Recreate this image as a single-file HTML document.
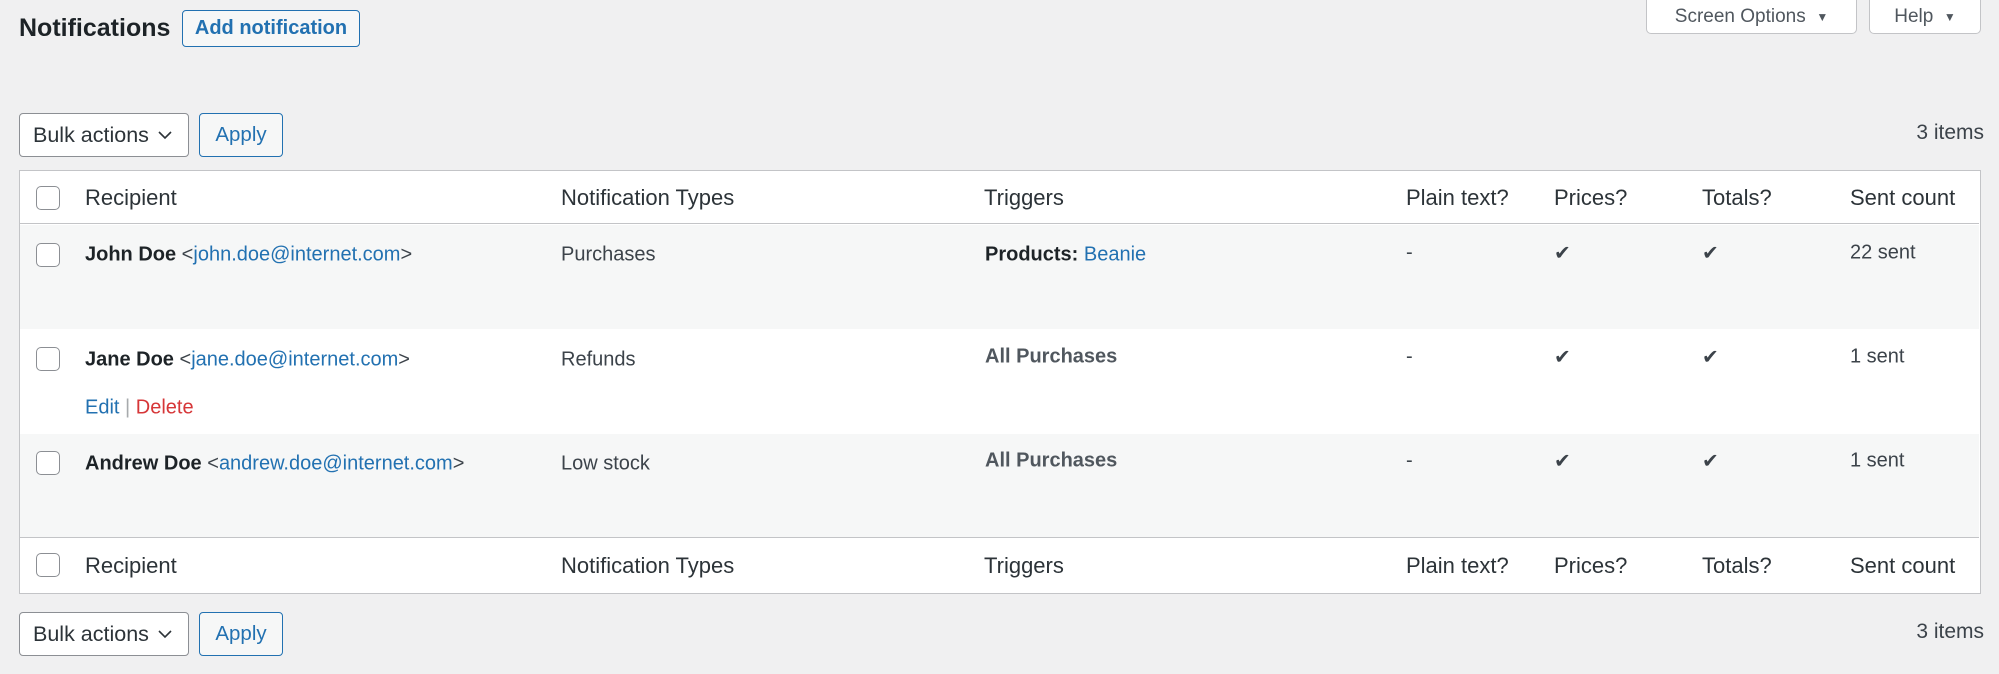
<!DOCTYPE html>
<html><head><meta charset="utf-8"><style>
*{box-sizing:border-box;margin:0;padding:0}
body{width:1999px;height:674px;background:#f0f0f1;font-family:"Liberation Sans",sans-serif;color:#3c434a;font-size:20px;position:relative;overflow:hidden}
.a{position:absolute;white-space:nowrap}
.btn{position:absolute;border:1.5px solid #2271b1;color:#2271b1;background:#f6f7f7;border-radius:4px;display:flex;align-items:center;justify-content:center;font-size:20px}
.sel{position:absolute;border:1.5px solid #8c8f94;background:#fff;border-radius:4px;color:#2c3338;font-size:21.5px;display:flex;align-items:center;padding-left:13px}
.tab{position:absolute;background:#fff;border:1px solid #c3c4c7;border-top:none;border-radius:0 0 5px 5px;color:#50575e;font-size:19px;display:flex;align-items:center;justify-content:center}
.cb{position:absolute;width:24px;height:24px;border:1.5px solid #8c8f94;border-radius:5px;background:#fff}
.row{position:absolute;left:20px;width:1959px}
.t{position:absolute;transform:translateY(-50%);white-space:nowrap}
a{color:#2271b1;text-decoration:none}
b{color:#1d2327;font-weight:bold}
.h{font-size:22px;color:#2c3338}
</style></head><body>
<div class="a" style="left:19px;top:14px;font-size:25px;font-weight:bold;color:#1d2327">Notifications</div>
<div class="btn" style="left:182px;top:10px;width:178px;height:37px;font-weight:bold">Add notification</div>
<div class="tab" style="left:1646px;top:0;width:211px;height:34px">Screen Options&nbsp;&nbsp;<span style="font-size:12px">▼</span></div>
<div class="tab" style="left:1869px;top:0;width:112px;height:34px">Help&nbsp;&nbsp;<span style="font-size:12px">▼</span></div>

<div class="sel" style="left:19px;top:113px;width:170px;height:44px">Bulk actions <svg style="margin-left:9px" width="14" height="9" viewBox="0 0 14 9"><path d="M1 1l6 6 6-6" fill="none" stroke="#2c3338" stroke-width="1.6"/></svg></div>
<div class="btn" style="left:199px;top:113px;width:84px;height:44px;font-size:20.5px">Apply</div>
<div class="a" style="right:15px;top:121px;font-size:21px">3 items</div>

<div style="position:absolute;left:19px;top:170px;width:1962px;height:424px;border:1px solid #c3c4c7;background:#fff"></div>
<div class="row" style="top:171px;height:53px;border-bottom:1px solid #c3c4c7;background:#fff"></div>
<div class="row" style="top:225px;height:104px;background:#f6f7f7"></div>
<div class="row" style="top:434px;height:103px;background:#f6f7f7"></div>
<div class="row" style="top:537px;height:56px;border-top:1px solid #c3c4c7;background:#fff"></div>

<div class="cb" style="left:36px;top:186px"></div>
<div class="t h" style="left:85px;top:198px">Recipient</div>
<div class="t h" style="left:561px;top:198px">Notification Types</div>
<div class="t h" style="left:984px;top:198px">Triggers</div>
<div class="t h" style="left:1406px;top:198px">Plain text?</div>
<div class="t h" style="left:1554px;top:198px">Prices?</div>
<div class="t h" style="left:1702px;top:198px">Totals?</div>
<div class="t h" style="left:1850px;top:198px">Sent count</div>

<div class="cb" style="left:36px;top:243px"></div>
<div class="t" style="left:85px;top:255px"><b>John Doe</b> &lt;<a>john.doe@internet.com</a>&gt;</div>
<div class="t" style="left:561px;top:255px">Purchases</div>
<div class="t" style="left:985px;top:255px"><b>Products:</b> <a>Beanie</a></div>
<div class="t" style="left:1406px;top:253px">-</div>
<div class="t" style="left:1554px;top:253px">✔</div>
<div class="t" style="left:1702px;top:253px">✔</div>
<div class="t" style="left:1850px;top:253px">22 sent</div>

<div class="cb" style="left:36px;top:347px"></div>
<div class="t" style="left:85px;top:360px"><b>Jane Doe</b> &lt;<a>jane.doe@internet.com</a>&gt;</div>
<div class="t" style="left:85px;top:408px"><a>Edit</a> <span style="color:#a7aaad">|</span> <span style="color:#d63638">Delete</span></div>
<div class="t" style="left:561px;top:360px">Refunds</div>
<div class="t" style="left:985px;top:357px;font-weight:bold;color:#50575e">All Purchases</div>
<div class="t" style="left:1406px;top:357px">-</div>
<div class="t" style="left:1554px;top:357px">✔</div>
<div class="t" style="left:1702px;top:357px">✔</div>
<div class="t" style="left:1850px;top:357px">1 sent</div>

<div class="cb" style="left:36px;top:451px"></div>
<div class="t" style="left:85px;top:464px"><b>Andrew Doe</b> &lt;<a>andrew.doe@internet.com</a>&gt;</div>
<div class="t" style="left:561px;top:464px">Low stock</div>
<div class="t" style="left:985px;top:461px;font-weight:bold;color:#50575e">All Purchases</div>
<div class="t" style="left:1406px;top:461px">-</div>
<div class="t" style="left:1554px;top:461px">✔</div>
<div class="t" style="left:1702px;top:461px">✔</div>
<div class="t" style="left:1850px;top:461px">1 sent</div>

<div class="cb" style="left:36px;top:553px"></div>
<div class="t h" style="left:85px;top:566px">Recipient</div>
<div class="t h" style="left:561px;top:566px">Notification Types</div>
<div class="t h" style="left:984px;top:566px">Triggers</div>
<div class="t h" style="left:1406px;top:566px">Plain text?</div>
<div class="t h" style="left:1554px;top:566px">Prices?</div>
<div class="t h" style="left:1702px;top:566px">Totals?</div>
<div class="t h" style="left:1850px;top:566px">Sent count</div>

<div class="sel" style="left:19px;top:612px;width:170px;height:44px">Bulk actions <svg style="margin-left:9px" width="14" height="9" viewBox="0 0 14 9"><path d="M1 1l6 6 6-6" fill="none" stroke="#2c3338" stroke-width="1.6"/></svg></div>
<div class="btn" style="left:199px;top:612px;width:84px;height:44px;font-size:20.5px">Apply</div>
<div class="a" style="right:15px;top:620px;font-size:21px">3 items</div>
</body></html>
